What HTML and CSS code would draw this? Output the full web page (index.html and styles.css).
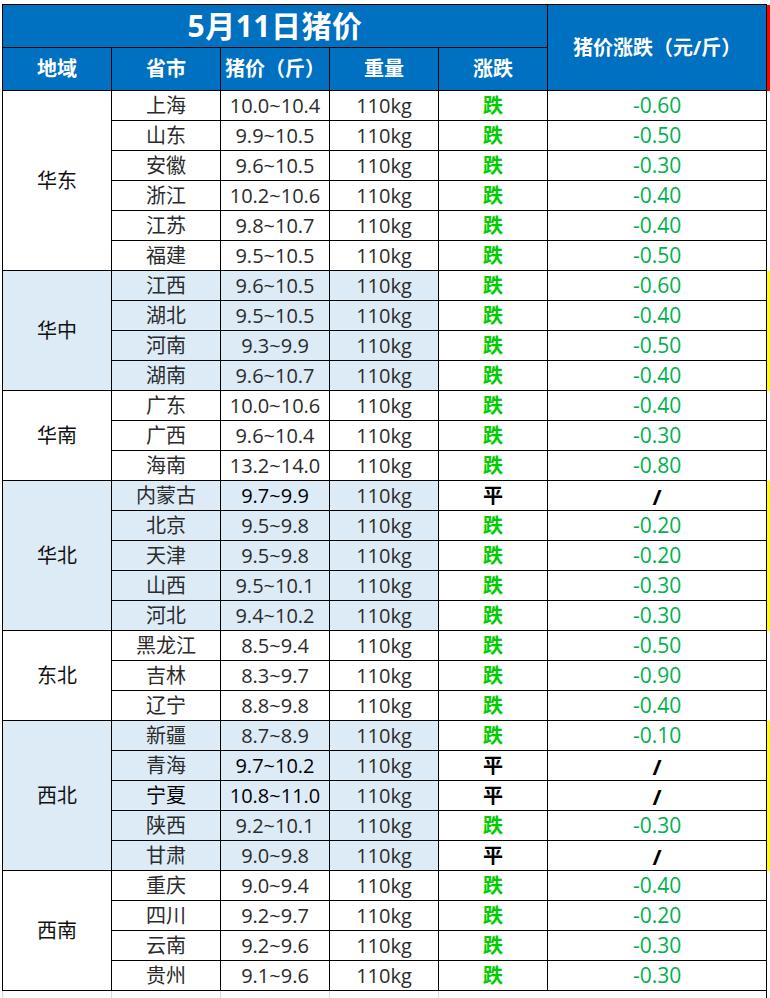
FILE: index.html
```html
<!DOCTYPE html>
<html lang="zh-CN">
<head>
<meta charset="utf-8">
<title>5月11日猪价</title>
<link rel="stylesheet" href="styles.css">
</head>
<body>
<div class="wrap">
<table class="sheet">
  <colgroup>
    <col class="c-std"><col class="c-std"><col class="c-std"><col class="c-std"><col class="c-std"><col class="c-wide"><col class="c-mark">
  </colgroup>
  <tr class="r-title">
    <td colspan="5" class="title">5月11日猪价</td>
    <td rowspan="2" class="hd">猪价涨跌（元/斤）</td>
    <td rowspan="2" class="mark red"></td>
  </tr>
  <tr class="r-head">
    <td class="hd">地域</td><td class="hd">省市</td><td class="hd">猪价（斤）</td><td class="hd">重量</td><td class="hd">涨跌</td>
  </tr>

  <tr class="row"><td rowspan="6" class="region">华东</td><td>上海</td><td>10.0~10.4</td><td>110kg</td><td class="down">跌</td><td class="val">-0.60</td><td rowspan="6" class="mark"></td></tr>
  <tr class="row"><td>山东</td><td>9.9~10.5</td><td>110kg</td><td class="down">跌</td><td class="val">-0.50</td></tr>
  <tr class="row"><td>安徽</td><td>9.6~10.5</td><td>110kg</td><td class="down">跌</td><td class="val">-0.30</td></tr>
  <tr class="row"><td>浙江</td><td>10.2~10.6</td><td>110kg</td><td class="down">跌</td><td class="val">-0.40</td></tr>
  <tr class="row"><td>江苏</td><td>9.8~10.7</td><td>110kg</td><td class="down">跌</td><td class="val">-0.40</td></tr>
  <tr class="row"><td>福建</td><td>9.5~10.5</td><td>110kg</td><td class="down">跌</td><td class="val">-0.50</td></tr>

  <tr class="row alt"><td rowspan="4" class="region">华中</td><td>江西</td><td>9.6~10.5</td><td>110kg</td><td class="down">跌</td><td class="val">-0.60</td><td rowspan="4" class="mark yellow"></td></tr>
  <tr class="row alt"><td>湖北</td><td>9.5~10.5</td><td>110kg</td><td class="down">跌</td><td class="val">-0.40</td></tr>
  <tr class="row alt"><td>河南</td><td>9.3~9.9</td><td>110kg</td><td class="down">跌</td><td class="val">-0.50</td></tr>
  <tr class="row alt"><td>湖南</td><td>9.6~10.7</td><td>110kg</td><td class="down">跌</td><td class="val">-0.40</td></tr>

  <tr class="row"><td rowspan="3" class="region">华南</td><td>广东</td><td>10.0~10.6</td><td>110kg</td><td class="down">跌</td><td class="val">-0.40</td><td rowspan="3" class="mark"></td></tr>
  <tr class="row"><td>广西</td><td>9.6~10.4</td><td>110kg</td><td class="down">跌</td><td class="val">-0.30</td></tr>
  <tr class="row"><td>海南</td><td>13.2~14.0</td><td>110kg</td><td class="down">跌</td><td class="val">-0.80</td></tr>

  <tr class="row alt"><td rowspan="5" class="region">华北</td><td>内蒙古</td><td class="dark">9.7~9.9</td><td>110kg</td><td class="flat">平</td><td class="none">/</td><td rowspan="5" class="mark yellow"></td></tr>
  <tr class="row alt"><td>北京</td><td>9.5~9.8</td><td>110kg</td><td class="down">跌</td><td class="val">-0.20</td></tr>
  <tr class="row alt"><td>天津</td><td>9.5~9.8</td><td>110kg</td><td class="down">跌</td><td class="val">-0.20</td></tr>
  <tr class="row alt"><td>山西</td><td>9.5~10.1</td><td>110kg</td><td class="down">跌</td><td class="val">-0.30</td></tr>
  <tr class="row alt"><td>河北</td><td>9.4~10.2</td><td>110kg</td><td class="down">跌</td><td class="val">-0.30</td></tr>

  <tr class="row"><td rowspan="3" class="region">东北</td><td>黑龙江</td><td>8.5~9.4</td><td>110kg</td><td class="down">跌</td><td class="val">-0.50</td><td rowspan="3" class="mark"></td></tr>
  <tr class="row"><td>吉林</td><td>8.3~9.7</td><td>110kg</td><td class="down">跌</td><td class="val">-0.90</td></tr>
  <tr class="row"><td>辽宁</td><td>8.8~9.8</td><td>110kg</td><td class="down">跌</td><td class="val">-0.40</td></tr>

  <tr class="row alt"><td rowspan="5" class="region">西北</td><td>新疆</td><td>8.7~8.9</td><td>110kg</td><td class="down">跌</td><td class="val">-0.10</td><td rowspan="5" class="mark yellow"></td></tr>
  <tr class="row alt"><td>青海</td><td class="dark">9.7~10.2</td><td>110kg</td><td class="flat">平</td><td class="none">/</td></tr>
  <tr class="row alt"><td class="dark">宁夏</td><td class="dark">10.8~11.0</td><td>110kg</td><td class="flat">平</td><td class="none">/</td></tr>
  <tr class="row alt"><td>陕西</td><td>9.2~10.1</td><td>110kg</td><td class="down">跌</td><td class="val">-0.30</td></tr>
  <tr class="row alt"><td>甘肃</td><td>9.0~9.8</td><td>110kg</td><td class="flat">平</td><td class="none">/</td></tr>

  <tr class="row"><td rowspan="4" class="region">西南</td><td>重庆</td><td>9.0~9.4</td><td>110kg</td><td class="down">跌</td><td class="val">-0.40</td><td rowspan="4" class="mark"></td></tr>
  <tr class="row"><td>四川</td><td>9.2~9.7</td><td>110kg</td><td class="down">跌</td><td class="val">-0.20</td></tr>
  <tr class="row"><td>云南</td><td>9.2~9.6</td><td>110kg</td><td class="down">跌</td><td class="val">-0.30</td></tr>
  <tr class="row"><td>贵州</td><td>9.1~9.6</td><td>110kg</td><td class="down">跌</td><td class="val">-0.30</td></tr>

  <tr class="r-tail"><td class="tail"></td><td class="tail"></td><td class="tail"></td><td class="tail"></td><td class="tail tail-end"></td><td class="tail tail-last"></td><td class="mark"></td></tr>
</table>
</div>
</body>
</html>
```

FILE: styles.css
```css
html, body {
  margin: 0;
  padding: 0;
  background: #ffffff;
}

body {
  font-family: "Open Sans", "Noto Sans CJK SC", sans-serif;
  color: #2b2b2b;
  overflow: hidden;
}

.wrap {
  padding: 4px 0 0 2px;
}

.sheet {
  border-collapse: collapse;
  table-layout: fixed;
  width: 769px;
}

.c-std { width: 109px; }
.c-wide { width: 219px; }
.c-mark { width: 5px; }

.sheet td {
  border: 1px solid #000000;
  padding: 0;
  text-align: center;
  vertical-align: middle;
  font-size: 20px;
  line-height: 1;
  white-space: nowrap;
  overflow: hidden;
}

.r-title { height: 43px; }
.r-head { height: 43px; }
.row { height: 30px; }
.r-tail { height: 8px; }

.sheet td.title {
  background: #0070c0;
  color: #ffffff;
  font-size: 30px;
  font-weight: 700;
  letter-spacing: 0.5px;
}

.sheet td.hd {
  background: #0070c0;
  color: #ffffff;
  font-weight: 700;
  font-size: 20px;
}

.region {
  color: #111111;
  background: #ffffff;
}

.row.alt td {
  background: #ddebf7;
}

.row.alt td.down,
.row.alt td.flat,
.row.alt td.val,
.row.alt td.none {
  background: #ffffff;
}

.down {
  color: #00cc00;
  font-weight: 700;
}

.flat {
  color: #000000;
  font-weight: 700;
}

.sheet td.val {
  color: #00b050;
  font-size: 21px;
}

.sheet td.none {
  color: #000000;
  font-weight: 700;
  font-size: 22px;
}

.dark {
  color: #000000;
}

.sheet td.mark,
.row.alt td.mark {
  border: none;
  background: #ffffff;
}

.sheet td.mark.red { background: #ff0000; }
.sheet td.mark.yellow,
.row.alt td.mark.yellow { background: #ffff00; }

.sheet td.tail {
  border-top: none;
  border-bottom: none;
  border-left: 1px solid #d9d9d9;
  border-right: 1px solid #d9d9d9;
}

.sheet td.tail.tail-end {
  border-right: none;
}

.sheet td.tail.tail-last {
  border-left: none;
  border-right: 1px solid #000000;
}
```
